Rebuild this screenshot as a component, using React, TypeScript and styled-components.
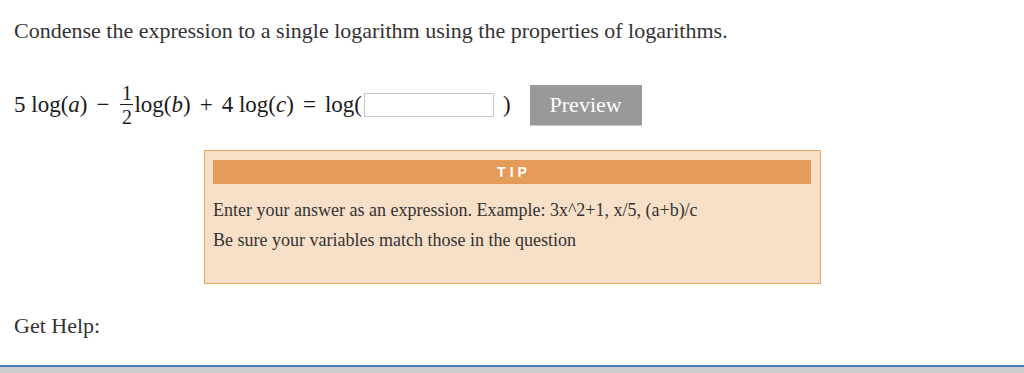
import styled, { createGlobalStyle } from 'styled-components';

const GlobalStyle = createGlobalStyle`
  html, body {
    margin: 0;
    padding: 0;
    background: #ffffff;
  }
  body {
    font-family: "Liberation Serif", "Times New Roman", serif;
    color: #333333;
  }
`;

const Page = styled.div`
  display: flex;
  flex-direction: column;
  height: 373px;
  overflow: hidden;
`;

const Content = styled.div`
  flex: 1;
  display: flex;
  flex-direction: column;
  padding: 0 14px;
`;

const Prompt = styled.p`
  margin: 18px 0 0;
  font-size: 22px;
  line-height: 26px;
  color: #333333;
`;

const MathRow = styled.div`
  display: flex;
  align-items: center;
  margin-top: 40px;
  height: 42px;
  font-family: "Liberation Serif", "Times New Roman", serif;
  font-size: 23px;
  color: #1a1a1a;
`;

const MathText = styled.span`
  white-space: pre;
`;

const Var = styled.i`
  font-style: italic;
`;

const Op = styled.span<{ gap?: number }>`
  margin: 0 ${p => p.gap ?? 9}px;
`;

const Frac = styled.span`
  display: inline-flex;
  flex-direction: column;
  align-items: center;
  margin: 0 1px 0 2px;
  font-size: 20px;
  line-height: 18px;
`;

const FracBar = styled.span`
  display: block;
  width: 13px;
  height: 1px;
  background: #1a1a1a;
  margin: 2px 0 3px;
`;

const AnswerInput = styled.input`
  box-sizing: border-box;
  width: 130px;
  height: 24px;
  margin: 0 0 0 2px;
  border: 1px solid #c8c8c8;
  background: #ffffff;
  outline: none;
`;

const CloseParen = styled.span`
  margin-left: 9px;
`;

const PreviewButton = styled.button`
  margin-left: 19px;
  width: 112px;
  height: 41px;
  border: none;
  border-bottom: 1px solid #c8c8c8;
  background: #999999;
  color: #ffffff;
  font-family: "Liberation Serif", "Times New Roman", serif;
  font-size: 22px;
  padding: 0;
`;

const TipBox = styled.div`
  box-sizing: border-box;
  margin: 24px 0 0 190px;
  width: 617px;
  height: 134px;
  border: 1px solid #eea65e;
  background: #f8e0c8;
  padding: 9px 9px 0 8px;
`;

const TipHeader = styled.div`
  height: 24px;
  background: #e49c58;
  color: #ffffff;
  font-family: "Liberation Sans", Arial, sans-serif;
  font-weight: bold;
  font-size: 14px;
  letter-spacing: 4px;
  text-indent: 4px;
  display: flex;
  align-items: center;
  justify-content: center;
`;

const TipLine = styled.p`
  margin: 0;
  font-size: 18px;
  line-height: 30px;
  color: #333333;
  &:first-of-type {
    margin-top: 11px;
  }
`;

const HelpLabel = styled.div`
  margin-top: 29px;
  font-size: 22px;
  line-height: 26px;
  color: #333333;
`;

const Footer = styled.div`
  height: 8px;
  border-top: 2px solid #4a78c2;
  background: #cccccc;
  box-sizing: border-box;
`;

export default function App() {
  return (
    <Page>
      <GlobalStyle />
      <Content>
        <Prompt>Condense the expression to a single logarithm using the properties of logarithms.</Prompt>

        <MathRow>
          <MathText>5 log(<Var>a</Var>)</MathText>
          <Op>−</Op>
          <Frac>
            <span>1</span>
            <FracBar />
            <span>2</span>
          </Frac>
          <MathText>log(<Var>b</Var>)</MathText>
          <Op>+</Op>
          <MathText>4 log(<Var>c</Var>)</MathText>
          <Op>=</Op>
          <MathText>log(</MathText>
          <AnswerInput type="text" aria-label="answer" />
          <CloseParen>)</CloseParen>
          <PreviewButton>Preview</PreviewButton>
        </MathRow>

        <TipBox>
          <TipHeader>TIP</TipHeader>
          <TipLine>Enter your answer as an expression. Example: 3x^2+1, x/5, (a+b)/c</TipLine>
          <TipLine>Be sure your variables match those in the question</TipLine>
        </TipBox>

        <HelpLabel>Get Help:</HelpLabel>
      </Content>
      <Footer />
    </Page>
  );
}
